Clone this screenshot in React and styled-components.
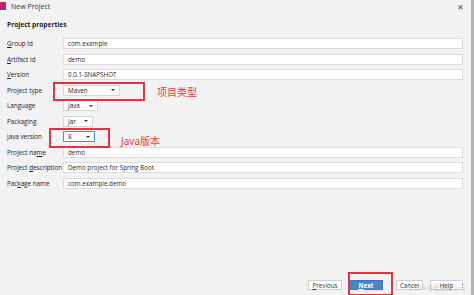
import styled, { createGlobalStyle } from 'styled-components';

const Global = createGlobalStyle`
  html, body { margin: 0; padding: 0; background: #f2f2f2; }
  * { box-sizing: border-box; }
`

const Window = styled.div`
  position: relative;
  width: 474px;
  height: 295px;
  overflow: hidden;
  background: #f2f2f2;
  font-family: 'Open Sans', 'Noto Sans', sans-serif;
  font-size: 6.3px;
  color: #1e1e1e;
  border-right: 3px solid #b4b4b4;
  display: flex;
  flex-direction: column;
`

const TitleBar = styled.div`
  height: 12px;
  display: flex;
  align-items: center;
  gap: 5px;
  font-size: 7px;
  color: #333;
`

const AppIcon = styled.div`
  width: 6px;
  height: 8px;
  background: linear-gradient(135deg, #e0245e 0%, #c0206a 45%, #3a4ed8 100%);
`

const Close = styled.span`
  margin-left: auto;
  margin-right: 7px;
  font-size: 8px;
  color: #555;
`

const Section = styled.div`
  padding: 4px 7px 0;
  font-weight: 700;
  font-size: 6.6px;
  height: 21px;
  display: flex;
  align-items: center;
`

const Form = styled.div`
  display: grid;
  grid-template-columns: 55px 1fr;
  grid-auto-rows: 15.5px;
  padding: 3px 8px 0 7px;
  align-items: center;
`

const Label = styled.div`
  white-space: nowrap;
`

const Input = styled.div`
  height: 11px;
  background: #fff;
  border: 1px solid #dcdcdc;
  display: flex;
  align-items: center;
  padding-left: 4px;
  margin-left: 1px;
  color: #2a2a2a;
`

const Select = styled.div`
  height: 11px;
  width: ${p => p.w}px;
  background: #fff;
  border: 1px solid ${p => (p.focused ? '#4a90d9' : '#d6d6d6')};
  display: flex;
  align-items: center;
  padding: 0 4px;
  margin-left: 1px;
  justify-content: space-between;
`

const Arrow = styled.span`
  width: 0;
  height: 0;
  border-left: 2px solid transparent;
  border-right: 2px solid transparent;
  border-top: 2.5px solid #333;
`

const Spacer = styled.div`
  flex: 1;
`

const Footer = styled.div`
  display: flex;
  justify-content: flex-end;
  gap: 7px;
  padding: 0 8px 5px 0;
`

const Button = styled.div`
  height: 10px;
  width: ${p => p.w}px;
  display: flex;
  align-items: center;
  justify-content: center;
  background: ${p => (p.primary ? '#4a86c6' : '#fff')};
  color: ${p => (p.primary ? '#fff' : '#333')};
  font-weight: ${p => (p.primary ? 700 : 400)};
  border: 1px solid ${p => (p.primary ? '#3c76b4' : '#cfcfcf')};
  font-size: 6.2px;
  margin-left: ${p => p.ml || 0}px;
`

const RedBox = styled.div`
  position: absolute;
  left: ${p => p.x}px;
  top: ${p => p.y}px;
  width: ${p => p.w}px;
  height: ${p => p.h}px;
  border: 2px solid #e5333b;
`

const Note = styled.div`
  position: absolute;
  left: ${p => p.x}px;
  top: ${p => p.y}px;
  color: #ee3a3a;
  font-size: 10px;
  font-family: 'Noto Sans', 'Noto Sans CJK SC', sans-serif;
  line-height: 12px;
`

const Watermark = styled.div`
  position: absolute;
  left: 409px;
  top: 283px;
  color: rgba(150, 150, 150, 0.5);
  font-size: 6.4px;
  white-space: nowrap;
  font-family: 'Noto Sans', 'Noto Sans CJK SC', sans-serif;
`

const U = styled.span`
  text-decoration: underline;
`

const rows = [
  [<><U>G</U>roup Id</>, 'input', 'com.example'],
  [<><U>A</U>rtifact Id</>, 'input', 'demo'],
  [<><U>V</U>ersion</>, 'input', '0.0.1-SNAPSHOT'],
  ['Project type', 'select', 'Maven', 57],
  ['Language', 'select', 'Java', 35],
  ['Packaging', 'select', 'Jar', 30],
  ['Java version', 'select', '8', 32, true],
  [<>Project na<U>m</U>e</>, 'input', 'demo'],
  [<>Project <U>d</U>escription</>, 'input', 'Demo project for Spring Boot'],
  [<>Pac<U>k</U>age name</>, 'input', 'com.example.demo'],
]

const App = () => {
  return <>
    <Global />
    <Window>
      <TitleBar>
        <AppIcon />
        New Project
        <Close>✕</Close>
      </TitleBar>
      <Section>Project properties</Section>
      <Form>
        {rows.map(([label, kind, value, w, focused], i) => [
          <Label key={'l' + i}>{label}</Label>,
          kind === 'input'
            ? <Input key={'v' + i}>{value}</Input>
            : <div key={'v' + i}>
                <Select w={w} focused={focused}>{value}<Arrow /></Select>
              </div>
        ])}
      </Form>
      <Spacer />
      <Footer>
        <Button w={34}><span><U>P</U>revious</span></Button>
        <Button w={34} primary><U>N</U>ext</Button>
        <Button w={27} ml={6}>Cancel</Button>
        <Button w={33}>Help</Button>
      </Footer>
      <RedBox x={53} y={82} w={92} h={19} />
      <RedBox x={49} y={128} w={61} h={20} />
      <RedBox x={348} y={272} w={45} h={24} />
      <Note x={157} y={86}>项目类型</Note>
      <Note x={121} y={135}>Java版本</Note>
      <Watermark>CSDN @程序猿小马</Watermark>
    </Window>
  </>
}

export default App;
